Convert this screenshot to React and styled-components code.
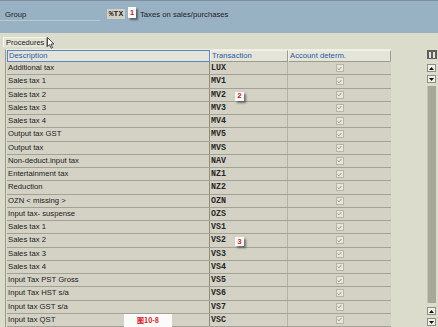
import React from 'react';
import styled, { createGlobalStyle } from 'styled-components';

const GlobalStyle = createGlobalStyle`
  html, body { margin: 0; padding: 0; }
  body {
    background: #dcdccc;
    font-family: "Liberation Sans", Arial, sans-serif;
    overflow: hidden;
    -webkit-font-smoothing: antialiased;
  }
`;

const Screen = styled.div`
  width: 438px;
  height: 327px;
  overflow: hidden;
  position: relative;
  background: #dcdccc;
`;

const HeaderBand = styled.header`
  height: 33px;
  box-sizing: border-box;
  background: #98b2c4;
  border-top: 1px solid #7c909f;
  display: flex;
  align-items: flex-start;
  padding-top: 8px;
`;

const FieldLabel = styled.div`
  width: 100px;
  height: 12px;
  box-sizing: border-box;
  padding-left: 5px;
  font-size: 7.7px;
  line-height: 11px;
  color: #1c1c1c;
  border-bottom: 1px solid #b8cad6;
`;

const KeyField = styled.div`
  margin-left: 7px;
  width: 18px;
  height: 10px;
  background: #d2d0c4;
  font-family: "Liberation Mono", "Courier New", monospace;
  font-weight: bold;
  font-size: 8px;
  line-height: 10px;
  text-align: center;
  color: #2a2a2a;
`;

const Badge = styled.span`
  display: inline-flex;
  align-items: center;
  justify-content: center;
  width: ${p => p.$w || 8}px;
  height: ${p => p.$h || 10}px;
  background: #fbfbfb;
  color: #d8141c;
  font-weight: bold;
  font-size: 7.5px;
  box-shadow: 2px 2px 2px rgba(0, 0, 0, 0.45);
`;

const HeaderBadge = styled(Badge)`
  margin-left: 3px;
  margin-top: -2px;
`;

const Title = styled.div`
  margin-left: 4px;
  font-size: 7.7px;
  line-height: 11px;
  color: #1c1c1c;
`;

const TabRow = styled.div`
  position: relative;
  height: 16px;
  padding: 4px 0 0 3px;
  box-sizing: border-box;
  display: flex;
`;

const Tab = styled.div`
  height: 10px;
  padding: 0 2px 0 2px;
  box-sizing: border-box;
  border: 1px solid #f6f6ee;
  border-right-color: #9a9a8c;
  border-bottom: none;
  background: #e4e4d6;
  font-size: 7.5px;
  line-height: 9px;
  color: #1c1c1c;
`;

const Cursor = styled.svg`
  position: absolute;
  left: 47px;
  top: 4px;
`;

const TableRegion = styled.div`
  display: flex;
  align-items: flex-start;
`;

const Table = styled.div`
  margin-left: 5px;
  width: 386px;
  box-sizing: border-box;
  border-top: 1px solid #eeeee4;
  border-left: 1px solid #9a9a8c;
  padding-left: 1px;
`;

const HeadRow = styled.div`
  display: grid;
  grid-template-columns: 203px 78px 103px;
  height: 12px;
`;

const HeadCell = styled.div`
  box-sizing: border-box;
  height: 12px;
  padding-left: 1px;
  background: #e4e4d8;
  border: 1px solid ${p => (p.$active ? '#5a86c8' : '#f2f2ea')};
  border-right-color: ${p => (p.$active ? '#5a86c8' : '#9c9c8e')};
  border-bottom-color: ${p => (p.$active ? '#5a86c8' : '#9c9c8e')};
  border-radius: ${p => (p.$last ? '0 2px 2px 0' : '0')};
  font-size: 7.7px;
  line-height: 10px;
  color: #2c5aa6;
  white-space: nowrap;
  overflow: hidden;
`;

const Row = styled.div`
  display: grid;
  grid-template-columns: 203px 78px 103px;
  height: 13.25px;
  box-sizing: border-box;
  background: #d4d2c4;
  border-bottom: 1px solid #a2a294;
`;

const DescCell = styled.div`
  padding-left: 1px;
  font-size: 7.7px;
  line-height: 12.25px;
  color: #202020;
  border-right: 1px solid #8e8e80;
  white-space: nowrap;
  overflow: hidden;
`;

const CodeCell = styled.div`
  position: relative;
  padding-left: 1px;
  font-family: "Liberation Mono", "Courier New", monospace;
  font-weight: bold;
  font-size: 8.3px;
  line-height: 12.25px;
  color: #262626;
  border-right: 1px solid #b4b4a6;
`;

const CheckCell = styled.div`
  display: flex;
  align-items: center;
  justify-content: center;
`;

const CheckBox = styled.span`
  width: 6px;
  height: 6px;
  background: #e6e6dc;
  border: 1px solid #b6b6a8;
  display: flex;
  align-items: center;
  justify-content: center;
`;

const RowBadge = styled(Badge)`
  position: absolute;
  left: 25px;
  top: 3px;
`;

const ScrollCol = styled.div`
  margin-left: 36px;
  width: 9px;
  padding-top: 1px;
  display: flex;
  flex-direction: column;
`;

const ConfigIcon = styled.svg`
  display: block;
`;

const ArrowBtn = styled.div`
  margin-top: ${p => p.$mt}px;
  width: 9px;
  height: 8px;
  box-sizing: border-box;
  background: #f2f2ec;
  border: 1px solid #8c8c80;
  display: flex;
  align-items: center;
  justify-content: center;
`;

const Track = styled.div`
  margin-top: 3px;
  width: 9px;
  height: 217px;
  background: #a8a898;
  border-left: 1px solid #c4c4b4;
  box-sizing: border-box;
`;

const Caption = styled.div`
  position: absolute;
  left: 124px;
  top: 314px;
  width: 48px;
  height: 14px;
  background: #fbfbfb;
  color: #d8141c;
  font-family: "Noto Sans CJK SC", "Liberation Sans", sans-serif;
  font-weight: bold;
  font-size: 7px;
  line-height: 13px;
  text-align: center;
`;

const rows = [
  ['Additional tax', 'LUX'],
  ['Sales tax 1', 'MV1'],
  ['Sales tax 2', 'MV2', '2'],
  ['Sales tax 3', 'MV3'],
  ['Sales tax 4', 'MV4'],
  ['Output tax GST', 'MV5'],
  ['Output tax', 'MVS'],
  ['Non-deduct.input tax', 'NAV'],
  ['Entertainment tax', 'NZ1'],
  ['Reduction', 'NZ2'],
  ['OZN < missing >', 'OZN'],
  ['Input tax- suspense', 'OZS'],
  ['Sales tax 1', 'VS1'],
  ['Sales tax 2', 'VS2', '3'],
  ['Sales tax 3', 'VS3'],
  ['Sales tax 4', 'VS4'],
  ['Input Tax PST Gross', 'VS5'],
  ['Input Tax HST s/a', 'VS6'],
  ['Input tax GST s/a', 'VS7'],
  ['Input tax QST', 'VSC'],
];

const Check = () => (
  <CheckBox>
    <svg width="5" height="5" viewBox="0 0 5 5">
      <path d="M0.6 2.5 L2 3.8 L4.4 1" fill="none" stroke="#8a8a80" strokeWidth="0.9" />
    </svg>
  </CheckBox>
);

const Up = () => (
  <svg width="5" height="3" viewBox="0 0 5 3"><polygon points="0,3 5,3 2.5,0" fill="#111" /></svg>
);
const Down = () => (
  <svg width="5" height="3" viewBox="0 0 5 3"><polygon points="0,0 5,0 2.5,3" fill="#111" /></svg>
);

export default function App() {
  return (
    <Screen>
      <GlobalStyle />
      <HeaderBand>
        <FieldLabel>Group</FieldLabel>
        <KeyField>%TX</KeyField>
        <HeaderBadge $h={11}>1</HeaderBadge>
        <Title>Taxes on sales/purchases</Title>
      </HeaderBand>
      <TabRow>
        <Tab>Procedures</Tab>
        <Cursor width="8" height="12" viewBox="0 0 8 12">
          <path d="M0.5 0.5 L0.5 9.5 L2.6 7.6 L4.2 11.2 L5.6 10.6 L4 7 L7 7 Z" fill="#fff" stroke="#222" strokeWidth="0.8" />
        </Cursor>
      </TabRow>
      <TableRegion>
        <Table>
          <HeadRow>
            <HeadCell $active>Description</HeadCell>
            <HeadCell>Transaction</HeadCell>
            <HeadCell $last>Account determ.</HeadCell>
          </HeadRow>
          {rows.map(([desc, code, badge], i) => (
            <Row key={i}>
              <DescCell>{desc}</DescCell>
              <CodeCell>
                {code}
                {badge && <RowBadge $w={9} $h={9}>{badge}</RowBadge>}
              </CodeCell>
              <CheckCell><Check /></CheckCell>
            </Row>
          ))}
        </Table>
        <ScrollCol>
          <ConfigIcon width="10" height="9" viewBox="0 0 10 9">
            <rect x="0" y="0" width="10" height="9" fill="#5e5e5a" />
            <rect x="2" y="2" width="2" height="6" fill="#e4e4dc" />
            <rect x="6" y="2" width="2" height="6" fill="#e4e4dc" />
          </ConfigIcon>
          <ArrowBtn $mt={5}><Up /></ArrowBtn>
          <ArrowBtn $mt={3}><Down /></ArrowBtn>
          <Track />
          <ArrowBtn $mt={4}><Up /></ArrowBtn>
          <ArrowBtn $mt={3}><Down /></ArrowBtn>
        </ScrollCol>
      </TableRegion>
      <Caption>图10-8</Caption>
    </Screen>
  );
}
